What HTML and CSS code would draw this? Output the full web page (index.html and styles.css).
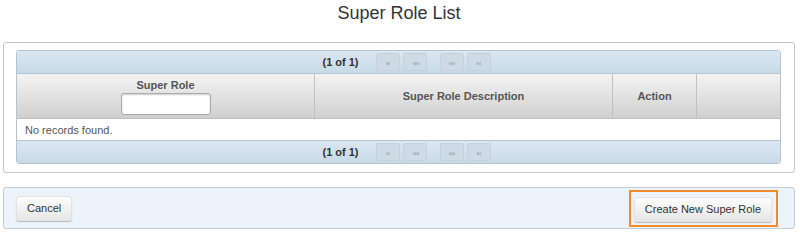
FILE: index.html
```html
<!DOCTYPE html>
<html lang="en">
<head>
    <meta charset="UTF-8">
    <title>Super Role List</title>
    <link rel="stylesheet" href="styles.css">
</head>
<body>
    <h1 class="title">Super Role List</h1>

    <div class="panel">
        <div class="grid">
            <div class="paginator">
                <span class="page-info">(1 of 1)</span>
                <span class="page-btn">|&#9664;</span>
                <span class="page-btn">&#9664;&#9664;</span>
                <span class="page-btn spaced">&#9654;&#9654;</span>
                <span class="page-btn">&#9654;|</span>
            </div>
            <table class="list">
                <thead>
                    <tr>
                        <th class="col-role">
                            <div>Super Role</div>
                            <input type="text" class="filter">
                        </th>
                        <th class="col-desc">Super Role Description</th>
                        <th class="col-action">Action</th>
                        <th class="col-extra"></th>
                    </tr>
                </thead>
                <tbody>
                    <tr>
                        <td colspan="4" class="empty">No records found.</td>
                    </tr>
                </tbody>
            </table>
            <div class="paginator bottom">
                <span class="page-info">(1 of 1)</span>
                <span class="page-btn">|&#9664;</span>
                <span class="page-btn">&#9664;&#9664;</span>
                <span class="page-btn spaced">&#9654;&#9654;</span>
                <span class="page-btn">&#9654;|</span>
            </div>
        </div>
    </div>

    <div class="actions">
        <button class="btn">Cancel</button>
        <div class="focus-ring">
            <button class="btn">Create New Super Role</button>
        </div>
    </div>
</body>
</html>
```

FILE: styles.css
```css
body {
    font-family: "Liberation Sans", Arial, sans-serif;
    background-color: #fff;
    margin: 0;
    padding: 0 5px 0 3px;
    color: #333;
}

.title {
    font-size: 18px;
    font-weight: normal;
    text-align: center;
    margin: 3px 0 0;
    height: 39px;
    line-height: 20px;
    color: #333;
}

.panel {
    border: 1px solid #c6c6c6;
    border-radius: 3px;
    padding: 7px 13px 8px 12px;
    background-color: #fff;
}

.grid {
    border: 1px solid #b6c3cf;
    border-radius: 3px;
    overflow: hidden;
}

.paginator {
    display: flex;
    justify-content: center;
    align-items: center;
    gap: 3px;
    height: 22px;
    padding-left: 16px;
    background: linear-gradient(#dbe7f1, #c8dae8);
    border-bottom: 1px solid #b4c4d2;
    font-size: 11px;
    font-weight: bold;
    color: #333;
}

.paginator.bottom {
    border-bottom: none;
    border-top: 1px solid #b4c4d2;
}

.page-info {
    margin-right: 14px;
}

.page-btn {
    display: inline-block;
    width: 24px;
    height: 18px;
    line-height: 18px;
    text-align: center;
    font-size: 5px;
    color: #b0bcc6;
    background-color: #cedbe6;
    border: 1px solid #c4d2de;
    border-radius: 2px;
    box-sizing: border-box;
    letter-spacing: -1px;
}

.page-btn.spaced {
    margin-left: 10px;
}

.list {
    width: 100%;
    border-collapse: collapse;
    table-layout: fixed;
}

.list th {
    height: 44px;
    background: linear-gradient(#f3f3f3, #d0d0d0);
    border-right: 1px solid #c2c2c2;
    border-bottom: 1px solid #bdbdbd;
    font-size: 11px;
    font-weight: bold;
    color: #555;
    padding: 0;
    vertical-align: middle;
}

.list th:last-child {
    border-right: none;
}

.col-role { width: 297px; }
.col-desc { width: 297px; }
.col-action { width: 83px; }

.col-role div {
    margin-top: 1px;
}

.filter {
    width: 90px;
    height: 22px;
    box-sizing: border-box;
    margin: 2px 0 0;
    border: 1px solid #aaa;
    border-radius: 3px;
    box-shadow: inset 0 1px 2px #ccc;
    background-color: #fff;
}

.empty {
    height: 21px;
    padding: 0 0 0 8px;
    font-size: 11px;
    color: #555;
    background-color: #fff;
}

.actions {
    display: flex;
    justify-content: space-between;
    align-items: center;
    margin-top: 14px;
    height: 40px;
    border: 1px solid #c4ccd4;
    border-radius: 3px;
    background-color: #ecf3fb;
    padding: 0 16px 0 12px;
}

.btn {
    font-family: "Liberation Sans", Arial, sans-serif;
    font-size: 11px;
    color: #333;
    height: 25px;
    padding: 0 10px;
    border: 1px solid #e2e2e2;
    border-radius: 3px;
    background: linear-gradient(#fdfdfd, #e6e6e6);
    box-shadow: 0 1px 1px #bbb;
}

.focus-ring {
    border: 2px solid #f08a2c;
    padding: 5px 4px 3px 3px;
    display: flex;
}
```
